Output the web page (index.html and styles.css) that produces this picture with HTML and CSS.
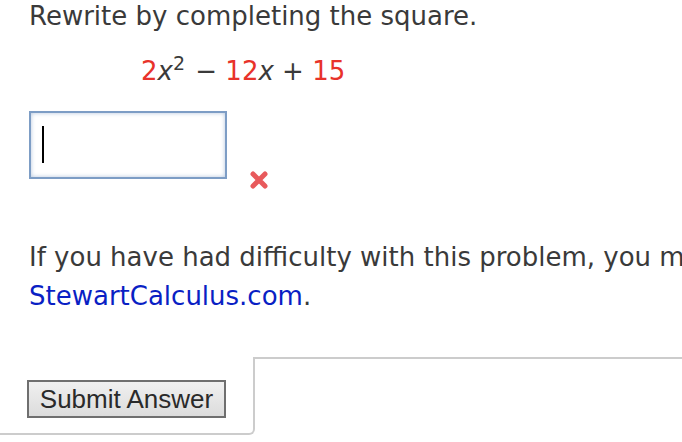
FILE: index.html
```html
<!DOCTYPE html>
<html lang="en">
<head>
  <meta charset="UTF-8">
  <title>Completing the Square</title>
  <link rel="stylesheet" href="styles.css">
</head>
<body>
  <div class="question">
    <p class="prompt">Rewrite by completing the square.</p>
    <div class="expr">
      <span class="num">2</span><i>x</i><sup>2</sup> &minus; <span class="num">12</span><i>x</i> + <span class="num">15</span>
    </div>
    <div class="answer-row">
      <div class="answer-box"><span class="caret"></span></div>
      <svg class="wrong" width="20" height="20" viewBox="0 0 20 20">
        <path d="M4 4 L16 16 M16 4 L4 16" stroke="#e85a5c" stroke-width="5" stroke-linecap="round"/>
      </svg>
    </div>
    <p class="help">If you have had difficulty with this problem, you may want to review the material at<br>
      <a href="#">StewartCalculus.com</a>.</p>
  </div>
  <div class="footer">
    <div class="submit-tab">
      <button>Submit Answer</button>
    </div>
    <div class="footer-rest"></div>
  </div>
</body>
</html>
```

FILE: styles.css
```css
body {
  margin: 0;
  font-family: "DejaVu Sans", Verdana, sans-serif;
  color: #3a3a3a;
  overflow: hidden;
  white-space: nowrap;
}

.question {
  padding-left: 29px;
}

.prompt {
  margin: 0;
  font-size: 26px;
  line-height: 32px;
}

.expr {
  margin-left: 112px;
  margin-top: 19px;
  font-size: 26px;
  line-height: 40px;
}

.expr i {
  font-style: italic;
}

.expr sup {
  font-size: 19px;
  line-height: 0;
  vertical-align: 0.55em;
  margin-right: 2px;
}

.num {
  color: #e8322a;
}

.answer-row {
  display: flex;
  align-items: flex-end;
  margin-top: 20px;
}

.answer-box {
  width: 194px;
  height: 64px;
  border: 2px solid #7d9dc5;
  box-shadow: inset 0 0 4px rgba(125, 157, 197, 0.6);
  position: relative;
}

.caret {
  position: absolute;
  left: 11px;
  top: 13px;
  width: 2px;
  height: 37px;
  background: #000;
}

.wrong {
  margin-left: 22px;
  margin-bottom: -11px;
}

.help {
  margin: 59px 0 0;
  font-size: 26px;
  line-height: 39px;
}

.help a {
  color: #0a1fc4;
  text-decoration: none;
}

.footer {
  display: flex;
  margin-top: 41px;
}

.submit-tab {
  width: 253px;
  height: 53px;
  border-right: 2px solid #cccccc;
  border-bottom: 2px solid #cccccc;
  border-bottom-right-radius: 6px;
  padding-top: 23px;
}

.submit-tab button {
  margin-left: 27px;
  width: 199px;
  height: 38px;
  font-family: "Liberation Sans", Arial, sans-serif;
  font-size: 26px;
  color: #2a2a2a;
  background: linear-gradient(#f0f0f0, #dcdcdc);
  border: 2px solid #6f6f6f;
  border-radius: 0;
  padding: 0;
}

.footer-rest {
  flex: 1;
  border-top: 2px solid #cccccc;
}
```
